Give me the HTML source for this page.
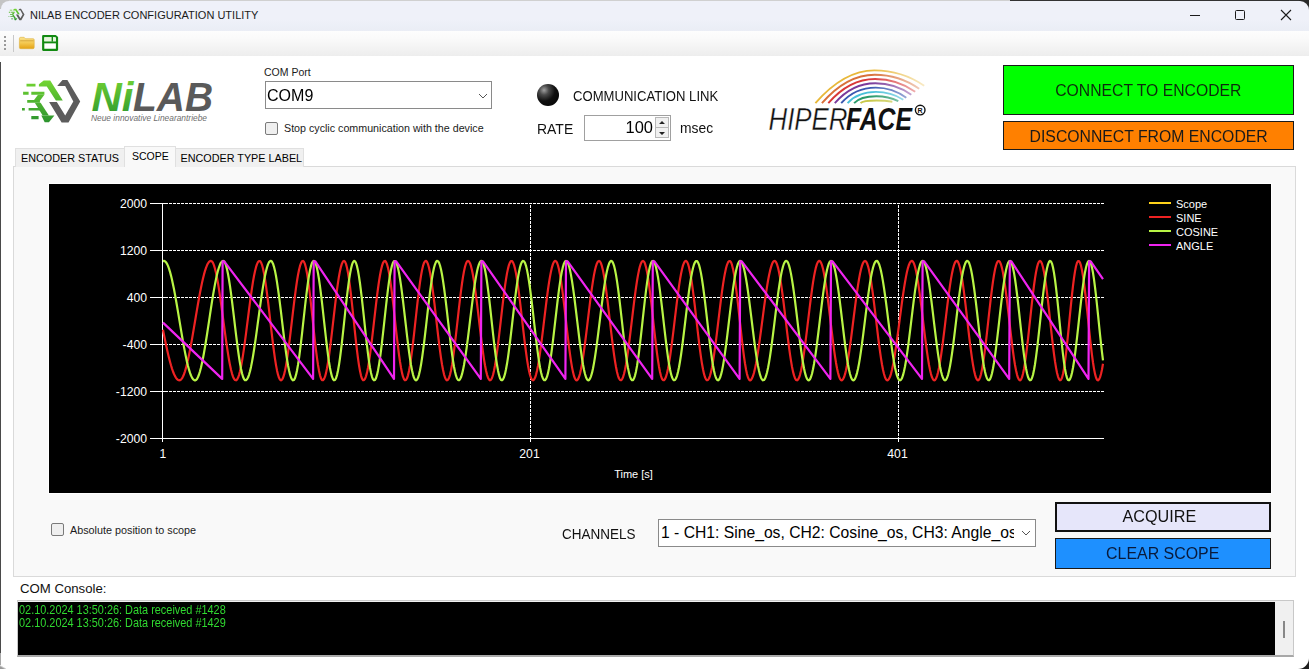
<!DOCTYPE html>
<html><head><meta charset="utf-8">
<style>
html,body{margin:0;padding:0;}
body{width:1309px;height:669px;position:relative;overflow:hidden;background:#ffffff;font-family:"Liberation Sans",sans-serif;color:#000;}
.a{position:absolute;white-space:nowrap;}
#titlebar{left:0;top:0;width:1309px;height:31px;background:linear-gradient(#eff1f9 60%,#eaedf5);}
#toolbar{left:0;top:31px;width:1309px;height:25px;background:linear-gradient(#fdfdfd,#fafafa 30%,#ededed);}
.lbl{font-size:11px;line-height:13px;}
.cb{width:11px;height:11px;border:1px solid #7a7a7a;border-radius:2px;background:#efefef;}
.combo{border:1px solid #8a8a8a;background:#fff;box-sizing:border-box;}
.btn{box-sizing:border-box;border:1px solid #1a1a1a;text-align:center;font-size:15.5px;}
.tab{box-sizing:border-box;border:1px solid #e0e0e0;border-bottom:none;background:#f0f0f0;font-size:10.8px;line-height:18px;padding-left:5px;color:#000;}
</style></head>
<body>
<!-- window chrome -->
<div class="a" id="titlebar"></div>
<div class="a" style="left:0;top:0;width:1309px;height:1px;background:#d0d0d0"></div>
<div class="a" style="left:1010px;top:0;width:299px;height:1px;background:#333"></div>
<div class="a" style="left:0;top:0;width:9px;height:9px;background:#c4c4c4"></div>
<div class="a" style="left:1px;top:1px;width:10px;height:10px;background:#eff1f9;border-top-left-radius:8px"></div>
<div class="a" style="left:1299px;top:0;width:10px;height:10px;background:#2a2a2a"></div>
<div class="a" style="left:1291px;top:1px;width:18px;height:18px;background:#eff1f9;border-top-right-radius:9px"></div>
<div class="a" style="left:30px;top:8px;font-size:11px;line-height:14px;color:#1b1b1b">NILAB ENCODER CONFIGURATION UTILITY</div>
<!-- app icon -->
<svg class="a" style="left:8px;top:7.5px" width="17" height="13" viewBox="20 78 62 47">
<use href="#logoicon"/>
</svg>
<!-- window controls -->
<div class="a" style="left:1190px;top:15px;width:10px;height:1px;background:#1b1b1b"></div>
<div class="a" style="left:1235px;top:10px;width:8px;height:8px;border:1px solid #1b1b1b;border-radius:1.5px"></div>
<svg class="a" style="left:1280px;top:9px" width="12" height="12" viewBox="0 0 12 12"><path d="M1 1L11 11M11 1L1 11" stroke="#1b1b1b" stroke-width="1.1"/></svg>

<div class="a" id="toolbar"></div>
<!-- grip -->
<div class="a" style="left:4px;top:36px;width:2px;height:2px;background:#9a9a9a"></div>
<div class="a" style="left:4px;top:40px;width:2px;height:2px;background:#9a9a9a"></div>
<div class="a" style="left:4px;top:44px;width:2px;height:2px;background:#9a9a9a"></div>
<div class="a" style="left:4px;top:48px;width:2px;height:2px;background:#9a9a9a"></div>
<div class="a" style="left:13px;top:35px;width:1px;height:17px;background:#c8c8c8"></div>
<!-- folder icon -->
<svg class="a" style="left:18px;top:35px" width="18" height="16" viewBox="18 35 18 16">
<defs><linearGradient id="fg" x1="0" y1="0" x2="0" y2="1"><stop offset="0" stop-color="#fbe48e"/><stop offset="0.5" stop-color="#f4c850"/><stop offset="1" stop-color="#e4a214"/></linearGradient></defs>
<path d="M19.4 38.6 q0-1.3 1.3-1.3 h3.4 l1.4 1.4 h7.6 q1.1 0 1.1 1.1 V47.4 q0 1.3-1.3 1.3 H20.7 q-1.3 0-1.3-1.3 Z" fill="url(#fg)" stroke="#dcae3c" stroke-width="0.6"/>
<path d="M20.2 40.8 H33.6" stroke="#c8962a" stroke-width="0.7"/>
</svg>
<!-- save icon -->
<svg class="a" style="left:41px;top:34px" width="18" height="18" viewBox="41 34 18 18">
<path d="M43.2 36.2 H55.6 L57 37.6 V49.8 H43.2 Z" fill="#fff" stroke="#128a12" stroke-width="2.2" stroke-linejoin="round"/>
<rect x="44.3" y="37.3" width="11.5" height="4.2" fill="#e6f6dc"/>
<path d="M43.2 42.4 H57" stroke="#128a12" stroke-width="1.9"/>
<rect x="51.6" y="37" width="1.4" height="4.6" fill="#128a12"/>
</svg>

<!-- NILAB LOGO -->
<svg class="a" style="left:18px;top:74px" width="200" height="52" viewBox="18 74 200 52">
<defs><linearGradient id="gg" x1="0" y1="0" x2="0" y2="1"><stop offset="0" stop-color="#7ad834"/><stop offset="1" stop-color="#2a962e"/></linearGradient>
<linearGradient id="gg2" gradientUnits="userSpaceOnUse" x1="0" y1="80" x2="0" y2="123"><stop offset="0" stop-color="#74d632"/><stop offset="1" stop-color="#2a922e"/></linearGradient></defs>
<g id="logoicon"><path d="M57.2 86.1 L62.5 80.1 L67.4 80.1 L80.2 101.5 L68.5 122.4 L61.6 122.4 L49.1 101.9 L56.8 101.9 L65.2 115.6 L73.3 101.5 L65.2 86.1 Z" fill="#5c5c5c"/>
<g fill="url(#gg2)">
<path d="M38.9 84.2 L43.7 80.4 L50.2 80.4 L62.8 100.6 L55.9 100.6 L46.8 86.6 L38.9 86.6 Z"/>
<path d="M26.5 83.8h9v2.8h-9z M23.1 91.7h5.5v3.1h-5.5z M31.3 91.7h13.1v3.1h-13.1z M27.2 100h12.7v2.7h-12.7z M22 107.9h2.8v2.7h-2.8z M28.6 107.9h12v2.7h-12z M31.3 116.1h7.3v3.1h-7.3z"/>
<path d="M38 94.8 L44.4 94.8 L39.9 100.7 L33.5 100.7 Z"/>
<path d="M34.8 102.7 L40.6 102.7 L48.9 115.5 L42.7 115.5 Z"/>
<path d="M41.3 115.5 L54.4 115.5 L48.9 122.3 L44.7 122.3 Z"/>
</g></g>
<text x="91.5" y="110.7" font-family="Liberation Sans" font-weight="bold" font-style="italic" font-size="41.5" fill="url(#gg)" textLength="42" lengthAdjust="spacingAndGlyphs">Ni</text>
<text x="133" y="110.7" font-family="Liberation Sans" font-weight="bold" font-style="italic" font-size="41.5" fill="#5a5a5a" textLength="80" lengthAdjust="spacingAndGlyphs">LAB</text>
<text x="91" y="121.3" font-family="Liberation Sans" font-style="italic" font-size="8.3" fill="#6e6e6e" textLength="116" lengthAdjust="spacingAndGlyphs">Neue innovative Linearantriebe</text>
</svg>

<!-- COM Port -->
<div class="a" style="left:264px;top:66px;font-size:10.5px;line-height:12px;color:#1b1b1b">COM Port</div>
<div class="a combo" style="left:265px;top:81px;width:227px;height:28px"></div>
<div class="a" style="left:267px;top:86.5px;font-size:16.8px;line-height:18px;transform:scaleX(0.955);transform-origin:0 0">COM9</div>
<svg class="a" style="left:478px;top:93px" width="10" height="6" viewBox="0 0 10 6"><path d="M1 1L5 5L9 1" fill="none" stroke="#555" stroke-width="1"/></svg>
<div class="a cb" style="left:265px;top:122px"></div>
<div class="a" style="left:284px;top:122px;font-size:10.7px;line-height:13px;color:#1b1b1b">Stop cyclic communication with the device</div>

<!-- LED -->
<div class="a" style="left:537px;top:84px;width:22px;height:22px;border-radius:50%;background:radial-gradient(circle at 32% 28%,#a0a0a0 0,#4a4a4a 22%,#101010 50%,#000 100%)"></div>
<div class="a" style="left:573px;top:88.5px;font-size:14px;line-height:15px;color:#111;transform:scaleX(0.935);transform-origin:0 0">COMMUNICATION LINK</div>
<div class="a" style="left:537px;top:121.5px;font-size:14.4px;line-height:15px;color:#111;transform:scaleX(0.97);transform-origin:0 0">RATE</div>
<div class="a" style="left:584px;top:115px;width:87px;height:26px;box-sizing:border-box;border:1px solid #a0a0a0;background:#fff"></div>
<div class="a" style="left:600px;top:119px;width:53px;text-align:right;font-size:16.8px;line-height:18px;transform:scaleX(0.98);transform-origin:100% 0">100</div>
<div class="a" style="left:655px;top:117px;width:14px;height:21px;box-sizing:border-box;border:1px solid #b8b8b8;background:#f0f0f0"></div>
<div class="a" style="left:656px;top:127px;width:12px;height:1px;background:#b8b8b8"></div>
<svg class="a" style="left:658px;top:119px" width="8" height="18" viewBox="0 0 8 18"><path d="M1 5L4 2L7 5Z M1 13L4 16L7 13Z" fill="#222"/></svg>
<div class="a" style="left:680px;top:120.5px;font-size:14px;line-height:15px;color:#111;transform:scaleX(0.99);transform-origin:0 0">msec</div>

<!-- HIPERFACE LOGO -->
<svg class="a" style="left:760px;top:62px" width="175" height="75" viewBox="760 62 175 75">
<defs><linearGradient id="fade" gradientUnits="userSpaceOnUse" x1="870" y1="0" x2="928" y2="0"><stop offset="0" stop-color="#fff"/><stop offset="1" stop-color="#fff" stop-opacity="0.25"/></linearGradient>
<mask id="fm"><rect x="760" y="62" width="175" height="75" fill="url(#fade)"/></mask></defs>
<g fill="none" stroke-width="1.9" mask="url(#fm)">
<path d="M815.4 103.2Q843.9 70.4 874.5 70.4Q901.8 70.4 924.2 85.8" stroke="#e8b83a"/>
<path d="M821.9 103.2Q846.6 74.7 874.8 74.7Q899.2 74.7 919.2 88.8" stroke="#d8703a"/>
<path d="M828.3 103.2Q849.3 79.0 875.1 79.0Q897.2 79.0 915.2 91.8" stroke="#d83838"/>
<path d="M834.8 103.2Q852.1 83.3 875.4 83.3Q895.1 83.3 911.3 94.8" stroke="#7a3a9a"/>
<path d="M841.2 103.2Q854.8 87.6 875.7 87.6Q892.5 87.6 906.3 97.7" stroke="#3a58b0"/>
<path d="M847.6 103.2Q857.5 91.9 876.0 91.9Q891.0 91.9 903.3 99.7" stroke="#48c0d8"/>
<path d="M854.1 103.2Q860.2 96.2 876.3 96.2Q888.4 96.2 898.3 101.2" stroke="#2a9a6a"/>
<path d="M860.5 103.2Q862.9 100.5 876.6 100.5Q885.3 100.5 892.4 101.7" stroke="#c8c84a"/>

</g>
<text x="768.5" y="129.6" font-family="Liberation Sans" font-style="italic" font-size="31" fill="#111" stroke="#fff" stroke-width="0.35" textLength="79" lengthAdjust="spacingAndGlyphs" style="paint-order:normal">HIPER</text>
<text x="846" y="129.6" font-family="Liberation Sans" font-weight="bold" font-style="italic" font-size="31" fill="#111" textLength="66" lengthAdjust="spacingAndGlyphs">FACE</text>
<circle cx="920.2" cy="110.1" r="4.8" fill="none" stroke="#111" stroke-width="1.4"/>
<text x="917.6" y="112.9" font-family="Liberation Sans" font-weight="bold" font-size="7" fill="#111">R</text>
</svg>

<!-- CONNECT/DISCONNECT -->
<div class="a btn" style="left:1003px;top:65px;width:291px;height:50px;background:#00ff00;line-height:50px;color:#0d2a0d"><span style="display:inline-block;font-size:16.8px;transform:scaleX(0.937)">CONNECT TO ENCODER</span></div>
<div class="a btn" style="left:1003px;top:121px;width:291px;height:29px;background:#ff8000;line-height:29px;color:#1a1a1a;font-size:15.7px"><span style="display:inline-block;font-size:16.8px;transform:scaleX(0.94)">DISCONNECT FROM ENCODER</span></div>

<!-- TABS -->
<div class="a" style="left:13px;top:166px;width:1283px;height:411px;box-sizing:border-box;border:1px solid #dadada;background:#f9f9f9"></div>
<div class="a tab" style="left:15px;top:148px;width:110px;height:19px;">ENCODER STATUS</div>
<div class="a tab" style="left:175px;top:148px;width:129px;height:19px;padding-left:4.5px">ENCODER TYPE LABEL</div>
<div class="a tab" style="left:124px;top:146px;width:52px;height:21px;background:#f9f9f9;line-height:19px;padding-left:7px;font-size:10.5px">SCOPE</div>

<!-- CHART -->
<svg class="a" style="left:48px;top:183px" width="1224" height="311" viewBox="48 183 1224 311">
<rect x="48.5" y="183.5" width="1223" height="310" fill="#000" stroke="#fff" stroke-width="1"/>
<g stroke="#fff" stroke-width="1" fill="none">
<path d="M165 203.5H1104M165 250.5H1104M165 297.5H1104M165 344.5H1104M165 391.5H1104" stroke-dasharray="3 1"/>
<path d="M530.5 205V438M898.5 205V438" stroke-dasharray="3 1"/>
<path d="M150 203.5H165M150 250.5H165M150 297.5H165M150 344.5H165M150 391.5H165M150 438.5H162"/>
<path d="M162.5 203V442M162 438.5H1104M530.5 438V442M898.5 438V442"/>
</g>
<g font-family="Liberation Sans" font-size="12.2" fill="#fff" text-anchor="end">
<text x="147" y="208">2000</text>
<text x="147" y="255">1200</text>
<text x="147" y="302">400</text>
<text x="147" y="349">-400</text>
<text x="147" y="396">-1200</text>
<text x="147" y="443">-2000</text>
</g>
<g font-family="Liberation Sans" font-size="12.2" fill="#fff" text-anchor="middle">
<text x="163" y="457.5">1</text>
<text x="529.5" y="457.5">201</text>
<text x="897.5" y="457.5">401</text>
<text x="633.5" y="478" font-size="11">Time [s]</text>
</g>
<g fill="none" stroke-width="2.2" stroke-linejoin="round">
<polyline stroke="#ee2222" points="163,329.8 164,334.9 165,339.8 166,344.7 167,349.3 168,353.7 169,357.9 170,361.7 171,365.3 172,368.6 173,371.5 174,374.0 175,376.1 176,377.8 177,379.1 178,379.9 179,380.3 180,380.2 181,379.6 182,378.4 183,376.5 184,374.2 185,371.3 186,367.9 187,364.0 188,359.7 189,355.0 190,350.0 191,344.6 192,339.1 193,333.3 194,327.4 195,321.5 196,315.5 197,309.6 198,303.8 199,298.2 200,292.8 201,287.7 202,282.9 203,278.5 204,274.4 205,270.9 206,267.8 207,265.3 208,263.3 209,261.9 210,261.1 211,260.9 212,261.4 213,262.9 214,265.4 215,268.7 216,272.8 217,277.7 218,283.3 219,289.4 220,296.1 221,303.1 222,310.5 223,318.0 224,325.5 225,332.9 226,340.2 227,347.2 228,353.7 229,359.7 230,365.1 231,369.7 232,373.6 233,376.7 234,378.8 235,380.0 236,380.3 237,379.6 238,377.8 239,375.1 240,371.3 241,366.7 242,361.3 243,355.1 244,348.4 245,341.2 246,333.6 247,325.7 248,317.8 249,310.0 250,302.3 251,294.9 252,288.0 253,281.7 254,276.0 255,271.2 256,267.2 257,264.1 258,262.0 259,261.0 260,261.0 261,262.3 262,264.8 263,268.5 264,273.3 265,279.1 266,285.8 267,293.3 268,301.3 269,309.7 270,318.4 271,327.1 272,335.7 273,344.0 274,351.7 275,358.8 276,365.1 277,370.4 278,374.7 279,377.8 280,379.7 281,380.4 282,379.7 283,377.9 284,374.9 285,370.8 286,365.6 287,359.6 288,352.7 289,345.1 290,337.1 291,328.7 292,320.2 293,311.6 294,303.3 295,295.3 296,287.8 297,281.0 298,275.0 299,270.0 300,265.9 301,263.1 302,261.3 303,260.9 304,261.8 305,264.2 306,268.0 307,273.2 308,279.5 309,287.0 310,295.2 311,304.1 312,313.5 313,323.0 314,332.4 315,341.6 316,350.2 317,358.1 318,365.0 319,370.8 320,375.3 321,378.4 322,380.1 323,380.2 324,379.1 325,376.7 326,373.1 327,368.3 328,362.5 329,355.9 330,348.4 331,340.4 332,331.9 333,323.2 334,314.5 335,305.8 336,297.5 337,289.7 338,282.6 339,276.2 340,270.9 341,266.6 342,263.4 343,261.5 344,260.9 345,261.6 346,263.9 347,267.7 348,272.8 349,279.2 350,286.7 351,295.0 352,304.0 353,313.4 354,323.0 355,332.6 356,341.8 357,350.5 358,358.4 359,365.3 360,371.1 361,375.6 362,378.6 363,380.2 364,380.2 365,378.9 366,376.3 367,372.6 368,367.7 369,361.7 370,354.9 371,347.4 372,339.2 373,330.7 374,321.9 375,313.1 376,304.5 377,296.2 378,288.5 379,281.4 380,275.2 381,270.0 382,265.9 383,262.9 384,261.3 385,260.9 386,261.9 387,264.2 388,267.9 389,272.8 390,278.8 391,285.9 392,293.7 393,302.1 394,311.0 395,320.1 396,329.3 397,338.2 398,346.7 399,354.6 400,361.7 401,367.8 402,372.9 403,376.7 404,379.2 405,380.3 406,380.0 407,378.3 408,375.3 409,370.9 410,365.4 411,358.8 412,351.3 413,343.0 414,334.3 415,325.2 416,316.0 417,306.9 418,298.2 419,289.9 420,282.4 421,275.8 422,270.3 423,265.9 424,262.9 425,261.2 426,260.9 427,261.9 428,264.2 429,267.7 430,272.4 431,278.0 432,284.6 433,292.0 434,300.0 435,308.4 436,317.1 437,325.9 438,334.5 439,342.9 440,350.7 441,358.0 442,364.4 443,369.8 444,374.3 445,377.5 446,379.6 447,380.3 448,379.8 449,377.9 450,374.8 451,370.4 452,364.9 453,358.4 454,351.0 455,342.9 456,334.4 457,325.5 458,316.6 459,307.7 460,299.1 461,291.0 462,283.5 463,276.9 464,271.3 465,266.8 466,263.5 467,261.5 468,260.9 469,261.5 470,263.2 471,266.2 472,270.3 473,275.3 474,281.3 475,288.1 476,295.5 477,303.4 478,311.7 479,320.2 480,328.6 481,337.0 482,344.9 483,352.4 484,359.3 485,365.3 486,370.5 487,374.6 488,377.7 489,379.6 490,380.3 491,379.8 492,378.0 493,375.0 494,370.8 495,365.5 496,359.3 497,352.2 498,344.5 499,336.2 500,327.6 501,318.8 502,310.1 503,301.6 504,293.6 505,286.0 506,279.3 507,273.4 508,268.6 509,264.8 510,262.3 511,261.0 512,261.0 513,262.3 514,264.8 515,268.6 516,273.4 517,279.3 518,286.0 519,293.6 520,301.6 521,310.1 522,318.8 523,327.6 524,336.2 525,344.5 526,352.2 527,359.3 528,365.5 529,370.8 530,375.0 531,378.0 532,379.8 533,380.3 534,379.6 535,377.8 536,374.8 537,370.7 538,365.7 539,359.8 540,353.1 541,345.8 542,337.9 543,329.8 544,321.4 545,313.1 546,304.9 547,297.0 548,289.5 549,282.7 550,276.6 551,271.4 552,267.1 553,263.9 554,261.8 555,260.9 556,261.2 557,262.7 558,265.5 559,269.5 560,274.6 561,280.8 562,287.7 563,295.4 564,303.7 565,312.3 566,321.0 567,329.8 568,338.4 569,346.6 570,354.2 571,361.1 572,367.1 573,372.1 574,376.0 575,378.7 576,380.1 577,380.3 578,379.2 579,377.0 580,373.7 581,369.3 582,364.0 583,357.9 584,351.0 585,343.5 586,335.5 587,327.3 588,318.9 589,310.6 590,302.5 591,294.7 592,287.4 593,280.8 594,274.9 595,270.0 596,266.1 597,263.2 598,261.4 599,260.9 600,261.5 601,263.3 602,266.4 603,270.6 604,275.8 605,282.0 606,289.0 607,296.6 608,304.8 609,313.3 610,321.9 611,330.5 612,338.9 613,346.9 614,354.4 615,361.1 616,367.0 617,372.0 618,375.8 619,378.5 620,380.0 621,380.3 622,379.4 623,377.2 624,374.0 625,369.7 626,364.5 627,358.3 628,351.4 629,344.0 630,336.0 631,327.7 632,319.3 633,311.0 634,302.8 635,294.9 636,287.6 637,281.0 638,275.1 639,270.1 640,266.1 641,263.2 642,261.4 643,260.9 644,261.6 645,263.6 646,267.1 647,271.7 648,277.5 649,284.4 650,292.1 651,300.4 652,309.2 653,318.3 654,327.5 655,336.4 656,345.0 657,353.1 658,360.4 659,366.7 660,372.0 661,376.0 662,378.8 663,380.2 664,380.2 665,379.0 666,376.7 667,373.2 668,368.7 669,363.3 670,357.0 671,350.0 672,342.4 673,334.4 674,326.1 675,317.7 676,309.3 677,301.2 678,293.4 679,286.2 680,279.7 681,274.0 682,269.2 683,265.4 684,262.8 685,261.2 686,260.9 687,261.8 688,263.9 689,267.3 690,271.9 691,277.4 692,283.9 693,291.2 694,299.2 695,307.5 696,316.2 697,325.0 698,333.7 699,342.0 700,350.0 701,357.3 702,363.8 703,369.3 704,373.9 705,377.3 706,379.4 707,380.3 708,380.0 709,378.5 710,375.8 711,372.1 712,367.3 713,361.6 714,355.2 715,348.0 716,340.3 717,332.3 718,324.0 719,315.6 720,307.3 721,299.3 722,291.7 723,284.7 724,278.4 725,272.9 726,268.3 727,264.8 728,262.3 729,261.1 730,261.0 731,262.2 732,264.9 733,268.9 734,274.0 735,280.3 736,287.6 737,295.6 738,304.2 739,313.3 740,322.4 741,331.6 742,340.5 743,348.9 744,356.6 745,363.5 746,369.4 747,374.1 748,377.5 749,379.6 750,380.4 751,379.9 752,378.4 753,376.0 754,372.7 755,368.6 756,363.7 757,358.0 758,351.8 759,345.0 760,337.9 761,330.5 762,322.9 763,315.3 764,307.7 765,300.4 766,293.4 767,286.9 768,280.8 769,275.5 770,270.9 771,267.1 772,264.1 773,262.1 774,261.0 775,260.9 776,262.0 777,264.2 778,267.6 779,272.0 780,277.3 781,283.5 782,290.5 783,298.0 784,306.0 785,314.3 786,322.7 787,331.1 788,339.2 789,347.0 790,354.3 791,360.9 792,366.7 793,371.6 794,375.4 795,378.2 796,379.9 797,380.3 798,379.6 799,377.8 800,374.8 801,370.7 802,365.7 803,359.8 804,353.1 805,345.8 806,337.9 807,329.8 808,321.4 809,313.1 810,304.9 811,297.0 812,289.5 813,282.7 814,276.6 815,271.4 816,267.1 817,263.9 818,261.8 819,260.9 820,261.1 821,262.6 822,265.1 823,268.8 824,273.5 825,279.1 826,285.5 827,292.7 828,300.4 829,308.5 830,316.8 831,325.2 832,333.5 833,341.6 834,349.3 835,356.3 836,362.7 837,368.2 838,372.8 839,376.4 840,378.8 841,380.1 842,380.3 843,379.3 844,377.3 845,374.2 846,370.2 847,365.3 848,359.6 849,353.2 850,346.2 851,338.8 852,331.0 853,323.0 854,315.0 855,307.1 856,299.4 857,292.1 858,285.4 859,279.2 860,273.8 861,269.3 862,265.6 863,263.0 864,261.4 865,260.9 866,261.4 867,263.2 868,266.1 869,270.1 870,275.1 871,281.0 872,287.6 873,294.9 874,302.8 875,311.0 876,319.3 877,327.7 878,336.0 879,344.0 880,351.4 881,358.3 882,364.5 883,369.7 884,374.0 885,377.2 886,379.4 887,380.3 888,380.1 889,378.9 890,376.8 891,373.8 892,369.8 893,365.1 894,359.6 895,353.5 896,346.9 897,339.8 898,332.4 899,324.8 900,317.2 901,309.6 902,302.1 903,295.0 904,288.3 905,282.2 906,276.6 907,271.8 908,267.8 909,264.7 910,262.4 911,261.2 912,260.9 913,261.7 914,263.6 915,266.7 916,270.8 917,275.9 918,281.9 919,288.6 920,295.9 921,303.7 922,311.9 923,320.2 924,328.5 925,336.7 926,344.5 927,351.9 928,358.7 929,364.7 930,369.9 931,374.1 932,377.3 933,379.4 934,380.3 935,380.1 936,378.7 937,376.1 938,372.5 939,367.8 940,362.3 941,355.9 942,348.8 943,341.1 944,333.1 945,324.8 946,316.4 947,308.1 948,300.1 949,292.4 950,285.3 951,278.9 952,273.4 953,268.7 954,265.1 955,262.5 956,261.1 957,260.9 958,261.9 959,264.3 960,267.8 961,272.5 962,278.2 963,284.8 964,292.3 965,300.3 966,308.8 967,317.5 968,326.3 969,335.0 970,343.4 971,351.2 972,358.4 973,364.8 974,370.2 975,374.6 976,377.8 977,379.7 978,380.4 979,379.7 980,377.6 981,374.2 982,369.6 983,363.8 984,357.0 985,349.4 986,341.1 987,332.4 988,323.3 989,314.2 990,305.3 991,296.7 992,288.6 993,281.3 994,275.0 995,269.6 996,265.5 997,262.6 998,261.1 999,261.0 1000,262.1 1001,264.5 1002,268.1 1003,272.9 1004,278.7 1005,285.3 1006,292.8 1007,300.8 1008,309.3 1009,318.0 1010,326.7 1011,335.4 1012,343.7 1013,351.5 1014,358.6 1015,365.0 1016,370.3 1017,374.6 1018,377.8 1019,379.7 1020,380.4 1021,379.6 1022,377.4 1023,373.8 1024,368.9 1025,362.8 1026,355.7 1027,347.7 1028,339.1 1029,329.9 1030,320.6 1031,311.3 1032,302.1 1033,293.5 1034,285.5 1035,278.4 1036,272.3 1037,267.4 1038,263.8 1039,261.6 1040,260.9 1041,261.6 1042,263.7 1043,267.2 1044,271.9 1045,277.9 1046,284.8 1047,292.6 1048,301.1 1049,310.0 1050,319.2 1051,328.4 1052,337.5 1053,346.1 1054,354.1 1055,361.4 1056,367.6 1057,372.7 1058,376.6 1059,379.1 1060,380.3 1061,379.9 1062,377.8 1063,374.0 1064,368.6 1065,361.7 1066,353.7 1067,344.7 1068,334.9 1069,324.7 1070,314.4 1071,304.3 1072,294.7 1073,285.8 1074,278.0 1075,271.4 1076,266.3 1077,262.8 1078,261.1 1079,261.0 1080,262.6 1081,265.7 1082,270.2 1083,276.0 1084,283.0 1085,291.0 1086,299.8 1087,309.1 1088,318.7 1089,328.3 1090,337.8 1091,346.8 1092,355.1 1093,362.5 1094,368.8 1095,373.9 1096,377.5 1097,379.7 1098,380.3 1099,379.5 1100,377.4 1101,374.0 1102,369.5 1103,363.8"/>
<polyline stroke="#b8f545" points="163,261.1 164,260.9 165,261.2 166,262.2 167,263.8 168,265.9 169,268.6 170,271.8 171,275.6 172,279.8 173,284.4 174,289.3 175,294.6 176,300.2 177,306.0 178,311.9 179,317.9 180,323.9 181,329.9 182,335.8 183,341.6 184,347.1 185,352.4 186,357.3 187,361.9 188,366.0 189,369.7 190,372.9 191,375.5 192,377.6 193,379.1 194,380.0 195,380.4 196,380.0 197,378.9 198,377.0 199,374.5 200,371.3 201,367.5 202,363.1 203,358.2 204,352.8 205,347.0 206,340.8 207,334.5 208,327.9 209,321.3 210,314.6 211,308.0 212,301.6 213,295.4 214,289.6 215,284.1 216,279.1 217,274.5 218,270.6 219,267.3 220,264.6 221,262.6 222,261.4 223,260.9 224,261.2 225,262.8 226,265.4 227,269.2 228,274.0 229,279.7 230,286.2 231,293.4 232,301.2 233,309.3 234,317.7 235,326.1 236,334.4 237,342.4 238,350.0 239,357.0 240,363.3 241,368.7 242,373.2 243,376.7 244,379.0 245,380.2 246,380.2 247,379.3 248,377.5 249,374.8 250,371.3 251,366.9 252,361.9 253,356.3 254,350.0 255,343.4 256,336.4 257,329.1 258,321.7 259,314.3 260,307.0 261,299.9 262,293.1 263,286.8 264,280.9 265,275.7 266,271.2 267,267.4 268,264.4 269,262.3 270,261.1 271,260.9 272,261.7 273,263.7 274,266.8 275,270.9 276,276.0 277,282.1 278,288.8 279,296.2 280,304.1 281,312.2 282,320.6 283,329.0 284,337.1 285,345.0 286,352.4 287,359.1 288,365.2 289,370.3 290,374.4 291,377.5 292,379.5 293,380.3 294,379.9 295,378.1 296,374.9 297,370.5 298,364.9 299,358.3 300,350.7 301,342.5 302,333.8 303,324.7 304,315.6 305,306.5 306,297.8 307,289.7 308,282.2 309,275.7 310,270.2 311,265.9 312,262.9 313,261.2 314,260.9 315,262.0 316,264.5 317,268.3 318,273.2 319,279.3 320,286.4 321,294.2 322,302.7 323,311.5 324,320.6 325,329.7 326,338.5 327,347.0 328,354.8 329,361.9 330,368.0 331,372.9 332,376.7 333,379.2 334,380.3 335,380.0 336,378.2 337,375.1 338,370.5 339,364.8 340,358.0 341,350.2 342,341.7 343,332.7 344,323.4 345,314.0 346,304.8 347,296.0 348,287.8 349,280.4 350,274.0 351,268.7 352,264.7 353,262.1 354,260.9 355,261.2 356,263.0 357,266.2 358,270.8 359,276.6 360,283.5 361,291.3 362,299.8 363,308.9 364,318.2 365,327.7 366,336.9 367,345.7 368,353.9 369,361.3 370,367.7 371,372.9 372,376.8 373,379.3 374,380.3 375,379.9 376,378.1 377,374.9 378,370.4 379,364.8 380,358.1 381,350.5 382,342.2 383,333.4 384,324.3 385,315.1 386,306.0 387,297.3 388,289.1 389,281.7 390,275.2 391,269.8 392,265.6 393,262.7 394,261.1 395,261.0 396,262.1 397,264.5 398,268.1 399,272.9 400,278.7 401,285.3 402,292.8 403,300.8 404,309.3 405,318.0 406,326.7 407,335.4 408,343.7 409,351.5 410,358.6 411,365.0 412,370.3 413,374.6 414,377.8 415,379.7 416,380.4 417,379.7 418,377.8 419,374.6 420,370.2 421,364.8 422,358.4 423,351.2 424,343.4 425,335.0 426,326.3 427,317.5 428,308.8 429,300.3 430,292.3 431,284.8 432,278.2 433,272.5 434,267.8 435,264.3 436,261.9 437,260.9 438,261.2 439,262.7 440,265.5 441,269.4 442,274.5 443,280.6 444,287.5 445,295.1 446,303.3 447,311.9 448,320.6 449,329.3 450,337.9 451,346.1 452,353.7 453,360.6 454,366.7 455,371.8 456,375.7 457,378.5 458,380.0 459,380.3 460,379.4 461,377.3 462,374.2 463,370.1 464,365.0 465,359.0 466,352.4 467,345.1 468,337.3 469,329.3 470,321.0 471,312.8 472,304.7 473,296.9 474,289.5 475,282.8 476,276.8 477,271.6 478,267.3 479,264.1 480,262.0 481,260.9 482,261.1 483,262.7 484,265.6 485,269.8 486,275.2 487,281.7 488,289.1 489,297.3 490,306.0 491,315.1 492,324.3 493,333.4 494,342.2 495,350.5 496,358.1 497,364.8 498,370.4 499,374.9 500,378.1 501,379.9 502,380.3 503,379.4 504,377.3 505,373.9 506,369.3 507,363.8 508,357.3 509,350.0 510,342.0 511,333.7 512,325.0 513,316.2 514,307.5 515,299.2 516,291.2 517,283.9 518,277.4 519,271.9 520,267.3 521,263.9 522,261.8 523,260.9 524,261.3 525,262.9 526,265.8 527,269.9 528,275.1 529,281.2 530,288.2 531,295.9 532,304.1 533,312.7 534,321.5 535,330.2 536,338.7 537,346.9 538,354.4 539,361.3 540,367.2 541,372.2 542,376.1 543,378.7 544,380.1 545,380.2 546,379.1 547,376.7 548,373.1 549,368.3 550,362.5 551,355.9 552,348.4 553,340.4 554,331.9 555,323.2 556,314.5 557,305.8 558,297.5 559,289.7 560,282.6 561,276.2 562,270.9 563,266.6 564,263.4 565,261.5 566,260.9 567,261.4 568,263.2 569,266.1 570,270.1 571,275.1 572,281.0 573,287.6 574,294.9 575,302.8 576,311.0 577,319.3 578,327.7 579,336.0 580,344.0 581,351.4 582,358.3 583,364.5 584,369.7 585,374.0 586,377.2 587,379.4 588,380.3 589,380.1 590,378.7 591,376.3 592,372.9 593,368.5 594,363.1 595,357.0 596,350.2 597,342.9 598,335.1 599,327.1 600,319.0 601,310.9 602,302.9 603,295.3 604,288.2 605,281.6 606,275.8 607,270.9 608,266.8 609,263.8 610,261.8 611,260.9 612,261.2 613,262.8 614,265.6 615,269.7 616,274.9 617,281.1 618,288.2 619,296.0 620,304.3 621,313.1 622,321.9 623,330.8 624,339.4 625,347.6 626,355.2 627,362.1 628,368.0 629,372.9 630,376.6 631,379.1 632,380.2 633,380.1 634,378.5 635,375.6 636,371.4 637,366.0 638,359.5 639,352.1 640,343.9 641,335.2 642,326.1 643,316.9 644,307.8 645,299.0 646,290.7 647,283.1 648,276.4 649,270.8 650,266.3 651,263.1 652,261.3 653,260.9 654,261.8 655,263.9 656,267.3 657,271.9 658,277.4 659,283.9 660,291.2 661,299.2 662,307.5 663,316.2 664,325.0 665,333.7 666,342.0 667,350.0 668,357.3 669,363.8 670,369.3 671,373.9 672,377.3 673,379.4 674,380.3 675,380.0 676,378.4 677,375.8 678,372.0 679,367.2 680,361.5 681,355.0 682,347.8 683,340.0 684,331.9 685,323.5 686,315.1 687,306.8 688,298.8 689,291.2 690,284.2 691,277.9 692,272.5 693,268.0 694,264.5 695,262.2 696,261.0 697,261.0 698,262.3 699,264.8 700,268.6 701,273.4 702,279.3 703,286.0 704,293.6 705,301.6 706,310.1 707,318.8 708,327.6 709,336.2 710,344.5 711,352.2 712,359.3 713,365.5 714,370.8 715,375.0 716,378.0 717,379.8 718,380.3 719,379.6 720,377.8 721,374.7 722,370.7 723,365.6 724,359.6 725,352.9 726,345.5 727,337.6 728,329.4 729,321.0 730,312.6 731,304.4 732,296.5 733,289.0 734,282.2 735,276.2 736,271.0 737,266.8 738,263.7 739,261.7 740,260.9 741,261.2 742,262.6 743,265.2 744,268.7 745,273.2 746,278.6 747,284.8 748,291.7 749,299.1 750,306.9 751,314.9 752,323.0 753,331.2 754,339.1 755,346.6 756,353.7 757,360.2 758,365.9 759,370.8 760,374.7 761,377.7 762,379.5 763,380.3 764,380.0 765,378.6 766,376.0 767,372.5 768,368.0 769,362.6 770,356.4 771,349.5 772,342.1 773,334.3 774,326.3 775,318.2 776,310.0 777,302.1 778,294.6 779,287.5 780,281.0 781,275.3 782,270.4 783,266.5 784,263.5 785,261.7 786,260.9 787,261.2 788,262.7 789,265.4 790,269.1 791,273.9 792,279.6 793,286.0 794,293.2 795,300.9 796,308.9 797,317.2 798,325.6 799,333.9 800,341.9 801,349.5 802,356.5 803,362.8 804,368.3 805,372.9 806,376.4 807,378.9 808,380.1 809,380.3 810,379.2 811,377.0 812,373.7 813,369.3 814,364.0 815,357.9 816,351.0 817,343.5 818,335.5 819,327.3 820,318.9 821,310.6 822,302.5 823,294.7 824,287.4 825,280.8 826,274.9 827,270.0 828,266.1 829,263.2 830,261.4 831,260.9 832,261.4 833,263.2 834,266.1 835,270.1 836,275.1 837,281.0 838,287.6 839,294.9 840,302.8 841,311.0 842,319.3 843,327.7 844,336.0 845,344.0 846,351.4 847,358.3 848,364.5 849,369.7 850,374.0 851,377.2 852,379.4 853,380.3 854,380.1 855,378.8 856,376.4 857,373.1 858,368.7 859,363.6 860,357.6 861,350.9 862,343.7 863,336.1 864,328.2 865,320.2 866,312.2 867,304.3 868,296.7 869,289.6 870,283.0 871,277.1 872,272.0 873,267.8 874,264.5 875,262.2 876,261.0 877,260.9 878,261.9 879,263.9 880,267.0 881,271.0 882,275.9 883,281.6 884,288.0 885,295.0 886,302.4 887,310.2 888,318.2 889,326.2 890,334.1 891,341.8 892,349.1 893,355.8 894,362.0 895,367.4 896,371.9 897,375.6 898,378.2 899,379.8 900,380.4 901,379.8 902,378.1 903,375.2 904,371.3 905,366.5 906,360.7 907,354.2 908,347.1 909,339.4 910,331.3 911,323.1 912,314.8 913,306.6 914,298.7 915,291.2 916,284.3 917,278.1 918,272.7 919,268.2 920,264.7 921,262.3 922,261.1 923,260.9 924,262.0 925,264.2 926,267.5 927,271.9 928,277.2 929,283.3 930,290.2 931,297.7 932,305.7 933,313.9 934,322.3 935,330.6 936,338.7 937,346.5 938,353.8 939,360.4 940,366.3 941,371.2 942,375.1 943,378.0 944,379.8 945,380.4 946,379.8 947,378.0 948,375.1 949,371.1 950,366.1 951,360.2 952,353.6 953,346.3 954,338.4 955,330.2 956,321.9 957,313.5 958,305.2 959,297.2 960,289.8 961,282.9 962,276.7 963,271.5 964,267.2 965,264.0 966,261.8 967,260.9 968,261.2 969,262.7 970,265.5 971,269.4 972,274.5 973,280.6 974,287.5 975,295.1 976,303.3 977,311.9 978,320.6 979,329.3 980,337.9 981,346.1 982,353.7 983,360.6 984,366.7 985,371.8 986,375.7 987,378.5 988,380.0 989,380.3 990,379.2 991,376.9 992,373.3 993,368.5 994,362.7 995,355.9 996,348.4 997,340.2 998,331.7 999,322.8 1000,313.9 1001,305.2 1002,296.8 1003,288.9 1004,281.8 1005,275.5 1006,270.2 1007,266.0 1008,263.0 1009,261.3 1010,260.9 1011,261.9 1012,264.2 1013,268.0 1014,272.9 1015,279.0 1016,286.1 1017,294.0 1018,302.5 1019,311.4 1020,320.6 1021,329.8 1022,338.7 1023,347.2 1024,355.1 1025,362.2 1026,368.3 1027,373.2 1028,377.0 1029,379.3 1030,380.3 1031,379.9 1032,378.0 1033,374.7 1034,370.0 1035,364.2 1036,357.2 1037,349.4 1038,340.8 1039,331.8 1040,322.5 1041,313.1 1042,303.9 1043,295.2 1044,287.0 1045,279.7 1046,273.4 1047,268.2 1048,264.4 1049,261.9 1050,260.9 1051,261.4 1052,263.6 1053,267.5 1054,272.9 1055,279.6 1056,287.6 1057,296.5 1058,306.0 1059,316.0 1060,326.2 1061,336.1 1062,345.7 1063,354.5 1064,362.3 1065,368.9 1066,374.2 1067,377.9 1068,379.9 1069,380.3 1070,379.2 1071,376.6 1072,372.8 1073,367.7 1074,361.5 1075,354.4 1076,346.4 1077,337.8 1078,328.9 1079,319.7 1080,310.5 1081,301.6 1082,293.1 1083,285.3 1084,278.4 1085,272.4 1086,267.5 1087,263.9 1088,261.7 1089,260.9 1090,261.5 1091,263.8 1092,267.6 1093,272.8 1094,279.4 1095,287.1 1096,295.7 1097,305.0 1098,314.7 1099,324.5 1100,334.3 1101,343.7 1102,352.4 1103,360.3"/>
<polyline stroke="#f024f0" points="163,322.6 222.2,378.9 222.6,261.4 224.2,261.4 313.1,378.9 313.7,261.4 315.3,261.4 394,378.9 394.6,261.4 396.2,261.4 480.8,378.9 481.4,261.4 483,261.4 565.4,378.9 566,261.4 567.6,261.4 652.2,378.9 652.8,261.4 654.4,261.4 739.6,378.9 740.2,261.4 741.8,261.4 830.4,378.9 831,261.4 832.6,261.4 922,378.9 922.6,261.4 924.2,261.4 1009.2,378.9 1009.8,261.4 1011.4,261.4 1088.5,378.9 1089.1,261.4 1090.7,261.4 1103,279.2"/>
</g>
<g stroke-width="2">
<path d="M1149 203H1171" stroke="#ffd21a"/>
<path d="M1149 217H1171" stroke="#ee2222"/>
<path d="M1149 231H1171" stroke="#b8f545"/>
<path d="M1149 245H1171" stroke="#f024f0"/>
</g>
<g font-family="Liberation Sans" font-size="11" fill="#fff">
<text x="1176" y="208">Scope</text>
<text x="1176" y="222">SINE</text>
<text x="1176" y="236">COSINE</text>
<text x="1176" y="250">ANGLE</text>
</g>
</svg>

<!-- Bottom of scope tab -->
<div class="a cb" style="left:51px;top:523px"></div>
<div class="a" style="left:70px;top:524px;font-size:10.8px;line-height:13px;color:#1b1b1b">Absolute position to scope</div>
<div class="a" style="left:562px;top:527px;font-size:14.2px;line-height:15px;color:#111;transform:scaleX(0.95);transform-origin:0 0">CHANNELS</div>
<div class="a combo" style="left:658px;top:519px;width:378px;height:28px;overflow:hidden"></div>
<div class="a" style="left:661px;top:524px;width:353px;overflow:hidden;font-size:15.7px;line-height:18px">1 - CH1: Sine_os, CH2: Cosine_os, CH3: Angle_os</div>
<svg class="a" style="left:1021px;top:530px" width="10" height="6" viewBox="0 0 10 6"><path d="M1 1L5 5L9 1" fill="none" stroke="#555" stroke-width="1"/></svg>
<div class="a btn" style="left:1055px;top:502px;width:216px;height:30px;background:#e6e6fa;border:2px solid #111;line-height:26px;font-size:16px;color:#111;text-indent:-4px"><span style="display:inline-block;font-size:16.8px;transform:scaleX(0.965)">ACQUIRE</span></div>
<div class="a btn" style="left:1055px;top:538px;width:216px;height:31px;background:#1e90ff;line-height:29px;font-size:15.8px;color:#0a1a3a"><span style="display:inline-block;font-size:16.8px;transform:scaleX(0.949)">CLEAR SCOPE</span></div>

<div class="a" style="left:1295px;top:655px;width:14px;height:14px;background:#1e1e1e"></div>
<div class="a" style="left:1270px;top:630px;width:39px;height:39px;background:#fff;border-bottom-right-radius:11px"></div>
<!-- COM console -->
<div class="a" style="left:20px;top:581px;font-size:13.2px;line-height:15px;color:#111">COM Console:</div>
<div class="a" style="left:17px;top:600px;width:1277px;height:57px;box-sizing:border-box;border:1px solid #c8c8c8;border-bottom:2px solid #a8a8a8;background:#f0f0f0"></div>
<div class="a" style="left:18px;top:602px;width:1257px;height:53px;background:#000"></div>
<div class="a" style="left:19px;top:603.8px;font-size:12.4px;line-height:13.4px;color:#30d830;transform:scaleX(0.88);transform-origin:0 0">02.10.2024 13:50:26: Data received #1428<br>02.10.2024 13:50:26: Data received #1429</div>
<div class="a" style="left:1283px;top:621px;width:2px;height:17px;background:#888"></div>

<!-- desktop strips -->
<div class="a" style="left:0;top:62px;width:1px;height:591px;background:#4a4a4a"></div>
<div class="a" style="left:0;top:653px;width:1px;height:12px;background:#a8a8a8"></div>
<div class="a" style="left:0;top:665px;width:6px;height:4px;background:linear-gradient(30deg,#9a9a9a 30%,#fff 60%)"></div>

</body></html>
